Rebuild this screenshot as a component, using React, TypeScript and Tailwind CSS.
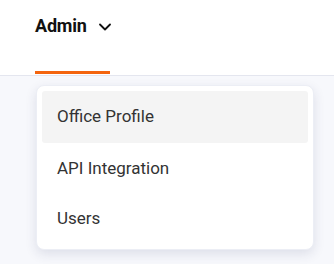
import React from "react";

export default function App() {
  return (
    <div className="relative w-[334px] h-[264px] bg-[#f7f8fc] overflow-hidden" style={{ fontFamily: "Roboto, 'Noto Sans', sans-serif" }}>
      <div className="h-[76px] bg-white border-b border-[#e4e6ef] pl-[35px] flex">
        <div className="relative w-[75px] h-full flex items-start pt-[14px]">
          <div className="flex items-center gap-[12px]">
            <span className="text-[18px] font-bold text-[#111] leading-[24px] tracking-[-0.2px]">Admin</span>
            <svg width="12" height="8" viewBox="0 0 12 8" fill="none" className="mt-[1px]">
              <path d="M1 1.5L6 6.5L11 1.5" stroke="#111" strokeWidth="1.8" strokeLinecap="round" strokeLinejoin="round" />
            </svg>
          </div>
          <div className="absolute left-0 bottom-[1px] w-[75px] h-[3px] bg-[#f4650f]" />
        </div>
      </div>
      <div className="absolute left-[36px] top-[85px] w-[278px] bg-white rounded-[8px] p-[5px] shadow-[0_4px_12px_rgba(30,40,90,0.12)] border border-[#eceef5]">
        <div className="h-[52px] bg-[#f4f4f4] rounded-[3px] flex items-center pl-[15px] text-[17px] text-[#333]">Office Profile</div>
        <div className="h-[51px] flex items-center pl-[15px] text-[17px] text-[#333]">API Integration</div>
        <div className="h-[50px] flex items-center pl-[15px] text-[17px] text-[#333]">Users</div>
      </div>
    </div>
  );
}
